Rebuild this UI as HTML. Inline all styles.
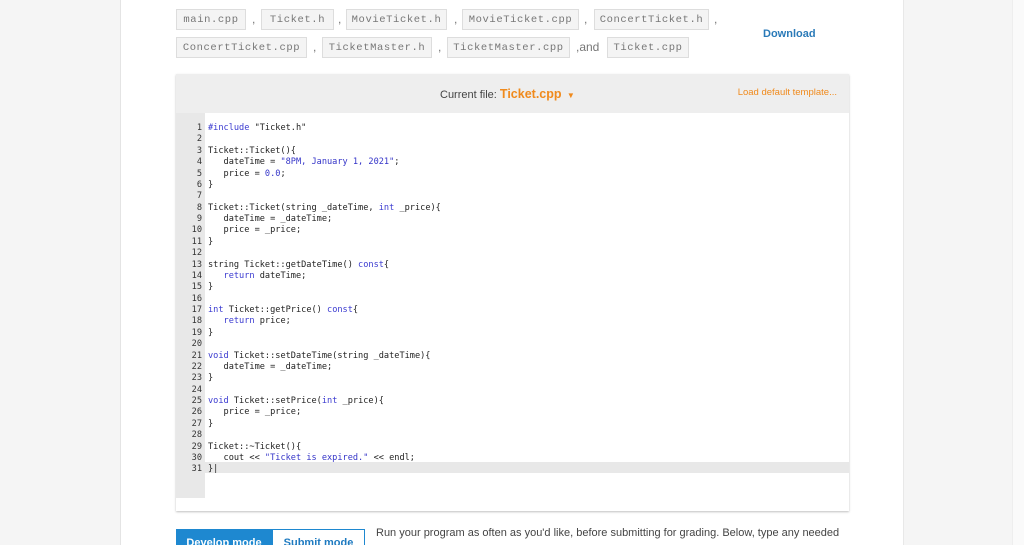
<!DOCTYPE html>
<html><head><style>
html,body{margin:0;width:1024px;height:545px;overflow:hidden}
body{background:#f5f5f5;font-family:"Liberation Sans",sans-serif;position:relative}
.card{position:absolute;left:120px;top:0;width:737px;height:545px;background:#fff;border-left:1px solid #e4e4e4;border-right:1px solid #e4e4e4}
.wh{position:absolute;left:858px;top:0;width:45px;height:545px;background:#fff;border-right:1px solid #e8e8e8}
.sb{position:absolute;left:1012px;top:0;width:12px;height:545px;background:#fafafa;border-left:1px solid #eee}
.th{position:absolute;left:1015px;top:264px;width:7px;height:142px;background:#8a8a8a;border-radius:4px}
.f{position:absolute;font-family:"Liberation Mono",monospace;font-size:10.5px;color:#777;background:#f4f4f4;border:1px solid #ddd;height:21px;line-height:20px;text-align:center;box-sizing:border-box;letter-spacing:.6px}
.c{position:absolute;font-size:12px;color:#777}
.ed{position:absolute;left:176px;top:74px;width:673px;height:437px;background:#fff;box-shadow:0 1px 2px rgba(0,0,0,.25)}
.hd{height:39px;background:#eee;position:relative}
.gut{position:absolute;left:0;top:39px;width:29px;height:385px;background:#e8e8e8}
pre{position:absolute;margin:0;font-family:"DejaVu Sans Mono",monospace;font-size:8.6px;line-height:11.37px;color:#222}
.k{color:#3a3ad0}.s{color:#3434c8}
</style></head><body>
<div class="card"></div><div class="wh"></div><div class="sb"><div class="th"></div></div>
<div class="f" style="left:176px;top:9px;width:70px">main.cpp</div><span class="c" style="left:252px;top:12px">,</span>
<div class="f" style="left:261px;top:9px;width:73px">Ticket.h</div><span class="c" style="left:338px;top:12px">,</span>
<div class="f" style="left:346px;top:9px;width:101px">MovieTicket.h</div><span class="c" style="left:454px;top:12px">,</span>
<div class="f" style="left:462px;top:9px;width:117px">MovieTicket.cpp</div><span class="c" style="left:584px;top:12px">,</span>
<div class="f" style="left:594px;top:9px;width:115px">ConcertTicket.h</div><span class="c" style="left:714px;top:12px">,</span>
<div class="f" style="left:176px;top:37px;width:131px">ConcertTicket.cpp</div><span class="c" style="left:313px;top:40px">,</span>
<div class="f" style="left:322px;top:37px;width:110px">TicketMaster.h</div><span class="c" style="left:438px;top:40px">,</span>
<div class="f" style="left:447px;top:37px;width:123px">TicketMaster.cpp</div><span class="c" style="left:576px;top:40px">,and</span>
<div class="f" style="left:607px;top:37px;width:82px">Ticket.cpp</div>
<div style="position:absolute;left:763px;top:28px;font-size:11px;font-weight:bold;color:#2a7ab8">Download</div>
<div class="ed"><div class="hd">
<span style="position:absolute;left:264px;top:13px;font-size:11px;color:#444">Current file: <b style="color:#f08a1c;font-size:12.5px">Ticket.cpp</b> <span style="color:#f08a1c;font-size:8px">&nbsp;▼</span></span>
<span style="position:absolute;right:12px;top:13px;font-size:9.5px;color:#f08a1c">Load default template...</span></div>
<div class="gut"></div>
<div style="position:absolute;left:0;top:388px;width:673px;height:11px;background:#e8e8e8"></div>
<pre style="left:4px;top:49px;width:22px;text-align:right;color:#333">1
2
3
4
5
6
7
8
9
10
11
12
13
14
15
16
17
18
19
20
21
22
23
24
25
26
27
28
29
30
31</pre>
<pre style="left:32px;top:49px"><span class="k">#include</span> "Ticket.h"

Ticket::Ticket(){
   dateTime = <span class="s">"8PM, January 1, 2021"</span>;
   price = <span class="s">0.0</span>;
}

Ticket::Ticket(string _dateTime, <span class="k">int</span> _price){
   dateTime = _dateTime;
   price = _price;
}

string Ticket::getDateTime() <span class="k">const</span>{
   <span class="k">return</span> dateTime;
}

<span class="k">int</span> Ticket::getPrice() <span class="k">const</span>{
   <span class="k">return</span> price;
}

<span class="k">void</span> Ticket::setDateTime(string _dateTime){
   dateTime = _dateTime;
}

<span class="k">void</span> Ticket::setPrice(<span class="k">int</span> _price){
   price = _price;
}

Ticket::~Ticket(){
   cout &lt;&lt; <span class="s">"Ticket is expired."</span> &lt;&lt; endl;
}|</pre>
</div>
<div style="position:absolute;left:176px;top:529px;width:96px;height:30px;background:#1e88d0;color:#fff;font-size:11px;font-weight:bold;text-align:center;line-height:26px;border:1px solid #1e88d0;box-sizing:border-box">Develop mode</div>
<div style="position:absolute;left:272px;top:529px;width:93px;height:30px;background:#fff;color:#1e7ac0;font-size:11px;font-weight:bold;text-align:center;line-height:26px;border:1px solid #1e88d0;box-sizing:border-box">Submit mode</div>
<div style="position:absolute;left:376px;top:527px;font-size:11px;color:#444">Run your program as often as you'd like, before submitting for grading. Below, type any needed</div>
</body></html>
